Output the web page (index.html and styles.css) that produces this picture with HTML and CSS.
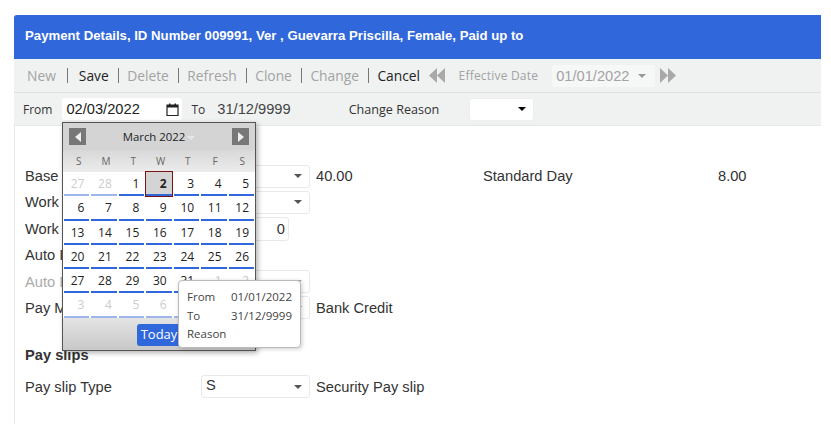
FILE: index.html
```html
<!DOCTYPE html>
<html lang="en">
<head>
    <meta charset="UTF-8">
    <meta name="viewport" content="width=device-width, initial-scale=1.0">
    <title>Payment Details</title>
    <link rel="stylesheet" href="styles.css">
</head>
<body>
    <div class="panel">
        <div class="panel-title">Payment Details, ID Number 009991, Ver , Guevarra Priscilla, Female, Paid up to</div>

        <div class="toolbar">
            <span class="tool first">New</span>
            <span class="tool active">Save</span>
            <span class="tool">Delete</span>
            <span class="tool">Refresh</span>
            <span class="tool">Clone</span>
            <span class="tool">Change</span>
            <span class="tool active last">Cancel</span>
            <svg class="nav-arrows" width="16" height="15" viewBox="0 0 16 15"><path d="M8 0v15L0 7.500zM16 0v15L8 7.500z"/></svg>
            <span class="eff-label">Effective Date</span>
            <div class="eff-select"><span>01/01/2022</span><i class="caret"></i></div>
            <svg class="nav-arrows" width="16" height="15" viewBox="0 0 16 15"><path d="M0 0v15l8-7.500zM8 0v15l8-7.500z"/></svg>
        </div>

        <div class="daterow">
            <span class="small-label from-label">From</span>
            <div class="date-input">
                <span>02/03/2022</span>
                <svg width="13" height="13" viewBox="0 0 13 13"><path d="M1 2h11v10.500H1z" fill="none" stroke="#222" stroke-width="1.200"/><path d="M1 2h11v2.500H1zM3 .5h1.500V3H3zM8.500 .5H10V3H8.500z" fill="#222"/></svg>
            </div>
            <span class="small-label to-label">To</span>
            <span class="to-value">31/12/9999</span>
            <span class="small-label reason-label">Change Reason</span>
            <div class="reason-select"><i class="caret dark"></i></div>
        </div>

        <div class="form">
            <div class="form-row">
                <span class="label">Base Hours</span>
                <div class="select"><i class="caret"></i></div>
                <span class="desc">40.00</span>
                <span class="label-2">Standard Day</span>
                <span class="value-2">8.00</span>
            </div>
            <div class="form-row">
                <span class="label">Work Pattern</span>
                <div class="select"><i class="caret"></i></div>
            </div>
            <div class="form-row">
                <span class="label">Work Units</span>
                <div class="number">0</div>
            </div>
            <div class="form-row">
                <span class="label">Auto Increment</span>
            </div>
            <div class="form-row disabled">
                <span class="label">Auto Increment Type</span>
                <div class="select"><i class="caret"></i></div>
            </div>
            <div class="form-row">
                <span class="label">Pay Method</span>
                <div class="select"><i class="caret"></i></div>
                <span class="desc">Bank Credit</span>
            </div>

            <div class="section-title">Pay slips</div>
            <div class="form-row">
                <span class="label">Pay slip Type</span>
                <div class="select"><span class="select-text">S</span><i class="caret"></i></div>
                <span class="desc">Security Pay slip</span>
            </div>
        </div>
    </div>

    <div class="calendar">
        <div class="cal-head">
            <span class="cal-btn"><svg width="6" height="10" viewBox="0 0 6 10"><path d="M6 0v10L0 5z"/></svg></span>
            <span class="cal-month">March 2022<i class="caret light"></i></span>
            <span class="cal-btn"><svg width="6" height="10" viewBox="0 0 6 10"><path d="M0 0v10l6-5z"/></svg></span>
        </div>
        <div class="cal-week">
            <span>S</span><span>M</span><span>T</span><span>W</span><span>T</span><span>F</span><span>S</span>
        </div>
        <div class="cal-days">
            <span class="day other">27</span><span class="day other">28</span><span class="day">1</span><span class="day selected">2</span><span class="day">3</span><span class="day">4</span><span class="day">5</span>
            <span class="day">6</span><span class="day">7</span><span class="day">8</span><span class="day">9</span><span class="day">10</span><span class="day">11</span><span class="day">12</span>
            <span class="day">13</span><span class="day">14</span><span class="day">15</span><span class="day">16</span><span class="day">17</span><span class="day">18</span><span class="day">19</span>
            <span class="day">20</span><span class="day">21</span><span class="day">22</span><span class="day">23</span><span class="day">24</span><span class="day">25</span><span class="day">26</span>
            <span class="day">27</span><span class="day">28</span><span class="day">29</span><span class="day">30</span><span class="day">31</span><span class="day other">1</span><span class="day other">2</span>
            <span class="day other">3</span><span class="day other">4</span><span class="day other">5</span><span class="day other">6</span><span class="day other">7</span><span class="day other">8</span><span class="day other">9</span>
        </div>
        <div class="cal-foot"><span class="today-btn">Today</span></div>
    </div>

    <div class="tooltip">
        <div class="tip-row"><span>From</span><span>01/01/2022</span></div>
        <div class="tip-row"><span>To</span><span>31/12/9999</span></div>
        <div class="tip-row"><span>Reason</span></div>
    </div>
</body>
</html>
```

FILE: styles.css
```css
* {
    margin: 0;
    padding: 0;
    box-sizing: border-box;
}

body {
    font-family: "Liberation Sans", Arial, sans-serif;
    font-size: 14.67px;
    color: #333;
    background: #fff;
    padding: 15px 10px 0 14px;
    height: 434px;
    overflow: hidden;
}

.panel {
    border-left: 1px solid #e8e8e8;
    height: 409px;
}

.panel-title {
    background: #3067db;
    color: #fff;
    font-weight: bold;
    font-size: 13.200px;
    height: 44px;
    line-height: 41px;
    padding-left: 11px;
    border-radius: 3px 0 0 0;
    margin-left: -1px;
}

/* toolbar */
.toolbar {
    display: flex;
    align-items: center;
    height: 34px;
    background: #f0f2f2;
    border-bottom: 1px solid #dfe1e1;
    font-family: "Open Sans", sans-serif;
    font-size: 13.800px;
    padding-left: 13px;
    margin-left: -1px;
}

.tool {
    color: #a3a3a3;
    padding-right: 9px;
    margin-right: 8.500px;
    border-right: 1px solid #777;
    line-height: 15px;
}

.tool.first {
    padding-right: 11px;
    margin-right: 11px;
}

.tool.active {
    color: #222;
}

.tool.last {
    border-right: none;
    padding-right: 0;
}

.nav-arrows {
    fill: #a9a9a9;
}

.eff-label {
    font-size: 12px;
    color: #a3a3a3;
    margin: 0 14px;
    letter-spacing: 0.2px;
}

.eff-select {
    display: flex;
    align-items: center;
    justify-content: space-between;
    width: 103px;
    height: 22px;
    background: #f6f7f7;
    border-radius: 3px;
    padding: 0 9px 0 4px;
    color: #a3a3a3;
    font-family: "Liberation Sans", Arial, sans-serif;
    font-size: 14.67px;
    margin-right: 5px;
}

.caret {
    display: block;
    width: 0;
    height: 0;
    margin-left: auto;
    border-left: 4px solid transparent;
    border-right: 4px solid transparent;
    border-top: 4px solid #555;
}

.eff-select .caret {
    border-top-color: #999;
}

.caret.dark {
    border-top-color: #000;
}

.caret.light {
    display: inline-block;
    border-top-color: #e6e6e6;
    margin-left: 2px;
    vertical-align: middle;
}

/* from / to row */
.daterow {
    display: flex;
    align-items: center;
    height: 33px;
    background: #f0f2f2;
    border-bottom: 1px solid #e6e8e8;
    padding-left: 9px;
    margin-left: -1px;
}

.small-label {
    font-family: "Open Sans", sans-serif;
    font-size: 12px;
    color: #333;
}

.date-input {
    display: flex;
    align-items: center;
    justify-content: space-between;
    width: 120px;
    height: 22px;
    background: #fff;
    border-radius: 3px;
    color: #222;
    padding: 0 3px 0 4px;
    margin-left: 10px;
}

.to-label {
    margin-left: 9px;
}

.to-value {
    margin-left: 12px;
    color: #444;
}

.reason-label {
    margin-left: 58px;
    font-size: 12.600px;
}

.reason-select {
    display: flex;
    align-items: center;
    width: 65px;
    height: 23px;
    background: #fff;
    border: 1px solid #eee;
    border-radius: 3px;
    padding-right: 7px;
    margin-left: 30px;
}

/* form */
.form {
    padding: 38px 0 0 10px;
}

.form-row {
    display: flex;
    align-items: center;
    height: 24px;
    margin-bottom: 2.400px;
}

.form-row.disabled {
    color: #aaa;
}

.form-row.disabled .caret {
    border-top-color: #aaa;
}

.label {
    width: 176px;
    flex-shrink: 0;
    white-space: nowrap;
}

.select {
    display: flex;
    align-items: center;
    width: 109px;
    height: 23px;
    border: 1px solid #e9e9e9;
    border-radius: 3px;
    padding: 0 7px 0 4px;
    color: #333;
}

.select-text {
    margin-top: -3px;
}

.number {
    width: 88px;
    height: 24px;
    line-height: 22px;
    border: 1px solid #e9e9e9;
    border-radius: 3px;
    text-align: right;
    padding-right: 3px;
}

.desc {
    margin-left: 6px;
    width: 167px;
}

.label-2 {
    width: 235px;
}

.section-title {
    font-weight: bold;
    height: 16px;
    line-height: 16px;
    margin: 27px 0 12px;
}

/* calendar popup */
.calendar {
    position: absolute;
    left: 62px;
    top: 122px;
    width: 194px;
    height: 229px;
    background: #fff;
    border: 1px solid #555;
    box-shadow: 2px 2px 5px rgba(0, 0, 0, 0.3);
    font-family: "Open Sans", sans-serif;
    font-size: 12px;
    color: #222;
}

.cal-head {
    display: flex;
    align-items: center;
    justify-content: space-between;
    height: 27px;
    background: #d4d4d4;
    padding: 0 6px;
}

.cal-month {
    font-size: 11.400px;
}

.cal-btn {
    display: flex;
    align-items: center;
    justify-content: center;
    width: 17px;
    height: 17px;
    background: #777;
    fill: #eee;
}

.cal-week {
    display: grid;
    grid-template-columns: repeat(7, 1fr);
    column-gap: 2px;
    height: 22px;
    background: linear-gradient(#d8d8d8, #ececec);
    padding: 0 0 0 3px;
    text-align: center;
    line-height: 22px;
    font-size: 10px;
    color: #666;
}

.cal-days {
    display: grid;
    grid-template-columns: repeat(7, 1fr);
    grid-auto-rows: 24.300px;
    column-gap: 2px;
    padding: 0 1px;
}

.day {
    text-align: right;
    padding-right: 5px;
    line-height: 23px;
    border-bottom: 2px solid #3067db;
}

.day.other {
    color: #ccc;
    border-bottom-color: #9db5ea;
}

.day.selected {
    font-weight: bold;
    background: #d4d4d4;
    outline: 1px solid #7a1212;
}

.cal-foot {
    display: flex;
    justify-content: center;
    padding-top: 6px;
    height: 32px;
    background: linear-gradient(#e4e4e4, #c8c8c8);
}

.today-btn {
    width: 44px;
    height: 22px;
    line-height: 20px;
    background: #3067db;
    color: #fff;
    font-size: 13px;
    text-align: center;
    border-radius: 3px;
}

/* tooltip over calendar */
.tooltip {
    position: absolute;
    left: 178px;
    top: 280px;
    width: 123px;
    height: 68px;
    background: #fff;
    border: 1px solid #bbb;
    border-radius: 4px;
    box-shadow: 1px 1px 4px rgba(0, 0, 0, 0.2);
    padding: 7px 8px 0 8px;
    font-family: "Open Sans", sans-serif;
    font-size: 11.500px;
    color: #444;
}

.tip-row {
    display: flex;
    justify-content: space-between;
    height: 18.500px;
    line-height: 18px;
}
```
